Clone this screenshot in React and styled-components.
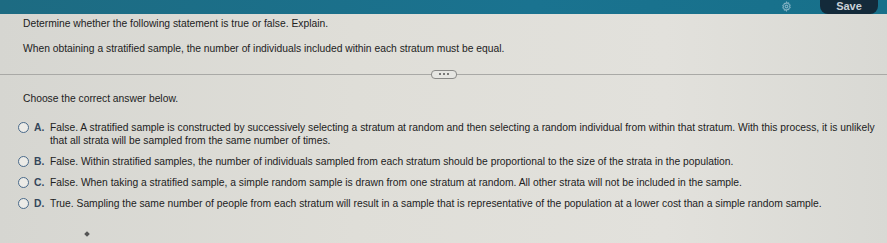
import styled, { createGlobalStyle } from "styled-components";

const GlobalStyle = createGlobalStyle`
  html, body {
    margin: 0;
    padding: 0;
    background: #dcdbd5;
  }
  body {
    font-family: "Liberation Sans", Arial, sans-serif;
    color: #222;
  }
`;

const Page = styled.div`
  width: 887px;
  height: 243px;
  overflow: hidden;
  background: linear-gradient(90deg, #d6d6d1 0%, #dfded8 40%, #e2e1dc 75%, #d9d9d4 100%);
`;

const TopBar = styled.div`
  height: 14px;
  background: linear-gradient(90deg, #1d6b82 0%, #1a7390 60%, #17708a 100%);
  display: flex;
  justify-content: flex-end;
  align-items: flex-start;
  padding-right: 9px;
  gap: 28px;
  overflow: hidden;
`;

const Gear = styled.svg`
  width: 11px;
  height: 11px;
  margin-top: 1px;
`;

const SaveButton = styled.div`
  width: 58px;
  height: 14px;
  background: #132a3a;
  border-radius: 0 0 8px 8px;
  color: #c9d2d8;
  font-weight: bold;
  font-size: 11px;
  line-height: 12px;
  display: flex;
  justify-content: center;
  align-items: flex-start;
`;

const Content = styled.div`
  padding: 0 0 0 23px;
`;

const Prompt = styled.p`
  margin: 0;
  font-size: 10.3px;
  line-height: 13px;
  padding-left: ${(p) => p.$indent || 0}px;
  margin-top: ${(p) => p.$top || 0}px;
`;

const Separator = styled.div`
  display: flex;
  align-items: center;
  height: 10px;
  margin: 14px 0 0 0;
`;

const Rule = styled.div`
  flex: 1;
  height: 1px;
  background: #a9a9a6;
`;

const Dots = styled.div`
  width: 24px;
  height: 7px;
  border: 1px solid #8a8a88;
  border-radius: 4px;
  background: #e6e6e2;
  display: flex;
  justify-content: center;
  align-items: center;
  gap: 2px;
  span {
    width: 2px;
    height: 2px;
    background: #555;
    border-radius: 1px;
  }
`;

const Options = styled.div`
  padding-left: 18px;
  margin-top: 16px;
  display: flex;
  flex-direction: column;
  gap: 8px;
`;

const Option = styled.div`
  display: flex;
  align-items: flex-start;
  font-size: 10.3px;
  line-height: 13px;
`;

const Radio = styled.span`
  flex: none;
  width: 9px;
  height: 9px;
  border: 1px solid #4a6a8a;
  border-radius: 50%;
  background: #ecebe7;
  margin-top: 1px;
  margin-right: 5px;
`;

const Letter = styled.span`
  flex: none;
  width: 16px;
  font-weight: bold;
  color: #34465a;
`;

const OptionText = styled.span`
  max-width: 830px;
`;

const Cursor = styled.div`
  margin: 22px 0 0 85px;
  width: 4px;
  height: 4px;
  background: #555;
  transform: rotate(45deg);
`;

const options = [
  {
    letter: "A.",
    text: "False. A stratified sample is constructed by successively selecting a stratum at random and then selecting a random individual from within that stratum. With this process, it is unlikely that all strata will be sampled from the same number of times.",
  },
  {
    letter: "B.",
    text: "False. Within stratified samples, the number of individuals sampled from each stratum should be proportional to the size of the strata in the population.",
  },
  {
    letter: "C.",
    text: "False. When taking a stratified sample, a simple random sample is drawn from one stratum at random. All other strata will not be included in the sample.",
  },
  {
    letter: "D.",
    text: "True. Sampling the same number of people from each stratum will result in a sample that is representative of the population at a lower cost than a simple random sample.",
  },
];

export default function App() {
  return (
    <Page>
      <GlobalStyle />
      <TopBar>
        <Gear viewBox="0 0 24 24" fill="none" stroke="#7fb0c2" strokeWidth="2.4">
          <circle cx="12" cy="12" r="3" />
          <path d="M12 2.5l1.6 2.6 3-.8.8 3 2.6 1.6-1.4 2.7 1.4 2.7-2.6 1.6-.8 3-3-.8L12 21.5l-1.6-2.6-3 .8-.8-3-2.6-1.6 1.4-2.7-1.4-2.7 2.6-1.6.8-3 3 .8z" />
        </Gear>
        <SaveButton>Save</SaveButton>
      </TopBar>
      <Content>
        <Prompt $top={3}>Determine whether the following statement is true or false. Explain.</Prompt>
        <Prompt $top={12}>When obtaining a stratified sample, the number of individuals included within each stratum must be equal.</Prompt>
      </Content>
      <Separator>
        <Rule />
        <Dots>
          <span />
          <span />
          <span />
        </Dots>
        <Rule />
      </Separator>
      <Content>
        <Prompt $top={13} $indent={-6}>Choose the correct answer below.</Prompt>
      </Content>
      <Options>
        {options.map((o) => (
          <Option key={o.letter}>
            <Radio />
            <Letter>{o.letter}</Letter>
            <OptionText>{o.text}</OptionText>
          </Option>
        ))}
      </Options>
      <Cursor />
    </Page>
  );
}
